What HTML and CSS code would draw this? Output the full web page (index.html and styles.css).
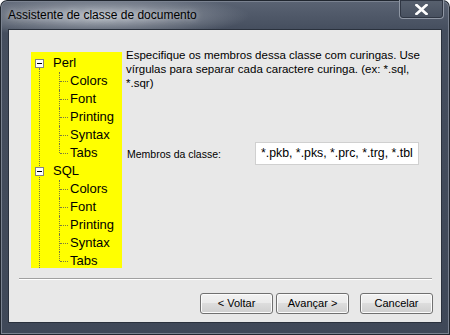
FILE: index.html
```html
<!DOCTYPE html>
<html>
<head>
<meta charset="utf-8">
<link rel="stylesheet" href="styles.css">
</head>
<body>
<div class="window">
  <div class="titlebar">
    <span class="title">Assistente de classe de documento</span>
    <span class="close">
      <svg width="13" height="11" viewBox="0 0 13 11"><path d="M1.5 1 L11.5 10 M11.5 1 L1.5 10" stroke="#ffffff" stroke-width="2.6" stroke-linecap="square"/></svg>
    </span>
  </div>
  <div class="client">
    <div class="main">
      <div class="tree">
        <div class="group">
          <div class="node root"><span class="box"></span><span class="label">Perl</span></div>
          <div class="child"><span class="label">Colors</span></div>
          <div class="child"><span class="label">Font</span></div>
          <div class="child"><span class="label">Printing</span></div>
          <div class="child"><span class="label">Syntax</span></div>
          <div class="child last"><span class="label">Tabs</span></div>
        </div>
        <div class="group">
          <div class="node root"><span class="box"></span><span class="label">SQL</span></div>
          <div class="child"><span class="label">Colors</span></div>
          <div class="child"><span class="label">Font</span></div>
          <div class="child"><span class="label">Printing</span></div>
          <div class="child"><span class="label">Syntax</span></div>
          <div class="child last"><span class="label">Tabs</span></div>
        </div>
      </div>
      <div class="content">
        <p class="desc">Especifique os membros dessa classe com curingas. Use vírgulas para separar cada caractere curinga. (ex: *.sql, *.sqr)</p>
        <div class="field">
          <span class="field-label">Membros da classe:</span>
          <span class="input">*.pkb, *.pks, *.prc, *.trg, *.tbl</span>
        </div>
      </div>
    </div>
    <div class="sep"></div>
    <div class="buttons">
      <span class="btn">&lt; Voltar</span>
      <span class="btn">Avançar &gt;</span>
      <span class="btn cancel">Cancelar</span>
    </div>
  </div>
</div>
</body>
</html>
```
FILE: styles.css
```css
html, body {
  margin: 0;
  padding: 0;
  background: #ffffff;
}
body {
  width: 450px;
  height: 335px;
  overflow: hidden;
  font-family: "Liberation Sans", Arial, sans-serif;
}
.window {
  width: 450px;
  height: 335px;
  box-sizing: border-box;
  padding: 0 8px 12px 8px;
  display: flex;
  flex-direction: column;
  border-radius: 7px 7px 0 0;
  background:
    radial-gradient(ellipse 150px 22px at 100px 16px, rgba(200,205,212,0.85), rgba(160,166,176,0.5) 55%, rgba(90,98,112,0) 100%),
    linear-gradient(to bottom, #5b6474 0px, #454e5e 30px, #3f4858 100%);
  box-shadow: inset 0 0 0 1px #20262f, inset 0 0 0 2px #7a8290;
}
.titlebar {
  height: 29px;
  flex: none;
  position: relative;
  display: flex;
  align-items: flex-start;
}
.title {
  font-size: 12px;
  color: #000000;
  margin-top: 8px;
  line-height: 14px;
  text-shadow: 0 0 6px rgba(230,232,236,0.9);
}
.close {
  position: absolute;
  right: -2px;
  top: 0;
  width: 45px;
  height: 19px;
  box-sizing: border-box;
  border: 1px solid #8f97a4;
  border-top: none;
  border-radius: 0 0 4px 4px;
  background: linear-gradient(to bottom, #58616f, #47505f);
  box-shadow: inset 0 0 0 1px #2f3643;
  display: flex;
  align-items: center;
  justify-content: center;
}
.client {
  flex: 1;
  background: #e8e8e8;
  border: 1px solid #2a313d;
  display: flex;
  flex-direction: column;
}
.main {
  display: flex;
  margin-top: 18px;
  margin-left: 22px;
  gap: 4px;
}
.tree {
  margin-top: 4px;
  width: 91px;
  height: 216px;
  background: #ffff00;
  box-sizing: border-box;
  padding-top: 2px;
  font-size: 13px;
  color: #000;
  overflow: hidden;
  position: relative;
}
.tree::before {
  content: "";
  position: absolute;
  left: 8px;
  top: 16px;
  bottom: 0;
  border-left: 1px dotted #7a7a40;
}
.group {
  display: flex;
  flex-direction: column;
}
.node, .child {
  height: 18px;
  line-height: 18px;
  display: flex;
  align-items: center;
  position: relative;
  white-space: nowrap;
}
.root .label {
  margin-left: 9px;
}
.box {
  margin-left: 4px;
  width: 9px;
  height: 9px;
  box-sizing: border-box;
  border: 1px solid #848484;
  background: #ffffff;
  position: relative;
  z-index: 1;
}
.box::after {
  content: "";
  position: absolute;
  left: 1px;
  top: 3px;
  width: 5px;
  height: 1px;
  background: #000;
}
.child .label {
  margin-left: 39px;
}
.child::before {
  content: "";
  position: absolute;
  left: 28px;
  top: 0;
  height: 18px;
  border-left: 1px dotted #7a7a40;
}
.child.last::before {
  height: 9px;
}
.child::after {
  content: "";
  position: absolute;
  left: 29px;
  top: 9px;
  width: 8px;
  border-top: 1px dotted #7a7a40;
}
.content {
  display: flex;
  flex-direction: column;
  font-size: 11px;
  color: #000;
}
.desc {
  margin: 0;
  width: 300px;
  font-size: 11.5px;
  line-height: 14px;
}
.field {
  display: flex;
  align-items: center;
  margin-top: 52px;
}
.field-label {
  width: 129px;
  padding-left: 1px;
  box-sizing: border-box;
  font-size: 10.5px;
}
.input {
  width: 164px;
  height: 23px;
  box-sizing: border-box;
  border: 1px solid #d0d0d0;
  background: #ffffff;
  padding-left: 5px;
  line-height: 21px;
  font-size: 12.3px;
  white-space: nowrap;
  overflow: hidden;
}
.sep {
  margin: 10px 9px 0 10px;
  height: 1px;
  background: #a0a0a0;
  border-bottom: 1px solid #ffffff;
}
.buttons {
  display: flex;
  justify-content: flex-end;
  margin: 13px 8px 0 0;
  gap: 3px;
}
.btn {
  width: 73px;
  height: 21px;
  box-sizing: border-box;
  border: 1px solid #707070;
  border-radius: 3px;
  background: linear-gradient(to bottom, #f2f2f2 0%, #ebebeb 45%, #dddddd 50%, #cfcfcf 100%);
  box-shadow: inset 0 0 0 1px #fbfbfb;
  font-size: 11px;
  line-height: 19px;
  text-align: center;
  color: #000;
}
.btn.cancel {
  margin-left: 8px;
}
```
